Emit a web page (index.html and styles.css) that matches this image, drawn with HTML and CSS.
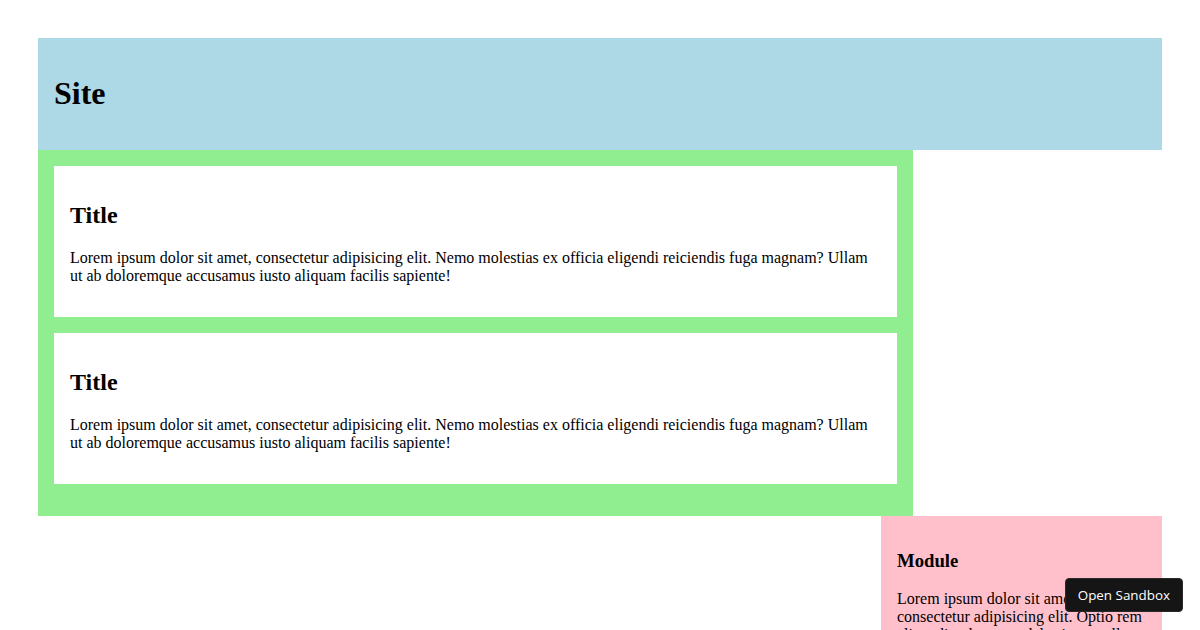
FILE: index.html
```html
<!DOCTYPE html>
<html lang="en">
<head>
<meta charset="utf-8">
<title>Site</title>
<link rel="stylesheet" href="styles.css">
</head>
<body>
<div class="page">
  <header class="site-header">
    <h1>Site</h1>
  </header>
  <main class="main">
    <article class="card">
      <h2>Title</h2>
      <p>Lorem ipsum dolor sit amet, consectetur adipisicing elit. Nemo molestias ex officia eligendi reiciendis fuga magnam? Ullam ut ab doloremque accusamus iusto aliquam facilis sapiente!</p>
    </article>
    <article class="card">
      <h2>Title</h2>
      <p>Lorem ipsum dolor sit amet, consectetur adipisicing elit. Nemo molestias ex officia eligendi reiciendis fuga magnam? Ullam ut ab doloremque accusamus iusto aliquam facilis sapiente!</p>
    </article>
  </main>
  <aside class="module">
    <h3>Module</h3>
    <p>Lorem ipsum dolor sit amet, consectetur adipisicing elit. Optio rem eligendi voluptatem laboriosam ullam dolorem, fugiat hic nesciunt.</p>
  </aside>
</div>
<a class="sandbox-btn" href="#">Open Sandbox</a>
</body>
</html>
```
FILE: styles.css
```css
html, body {
  margin: 0;
  padding: 0;
  background: #ffffff;
  overflow: hidden;
}
body {
  font-family: "Liberation Serif", "Times New Roman", serif;
  font-size: 16px;
  color: #000;
}
.page {
  padding: 38px;
  display: grid;
  grid-template-columns: 1fr 32px 249px;
}
.site-header {
  grid-column: 1 / 4;
  background: #add8e6;
  padding: 16px;
  display: flow-root;
}
.site-header h1 {
  font-size: 32px;
  margin: 21.44px 0;
  line-height: 37px;
}
.main {
  grid-column: 1 / 3;
  background: #90ee90;
  padding: 16px 16px 32px;
  display: flex;
  flex-direction: column;
  gap: 16px;
}
.card {
  background: #ffffff;
  padding: 16px;
  display: flow-root;
}
.card h2 {
  font-size: 24px;
  line-height: 27px;
  margin: 19.92px 0;
}
.card p {
  margin: 16px 0;
  line-height: 18px;
}
.module {
  grid-column: 2 / 4;
  background: #ffc0cb;
  padding: 16px;
  display: flow-root;
}
.module h3 {
  font-size: 18.72px;
  line-height: 21.5px;
  margin: 18.72px 0;
}
.module p {
  margin: 16px 0;
  line-height: 18px;
}
.sandbox-btn {
  position: fixed;
  right: 17px;
  bottom: 18px;
  background: #151515;
  color: #ffffff;
  font-family: "Open Sans", "Noto Sans", sans-serif;
  font-size: 13.4px;
  line-height: 16px;
  padding: 8px 12px;
  border-radius: 4px;
  border: 1px solid #2a2a2a;
  text-decoration: none;
}
```
